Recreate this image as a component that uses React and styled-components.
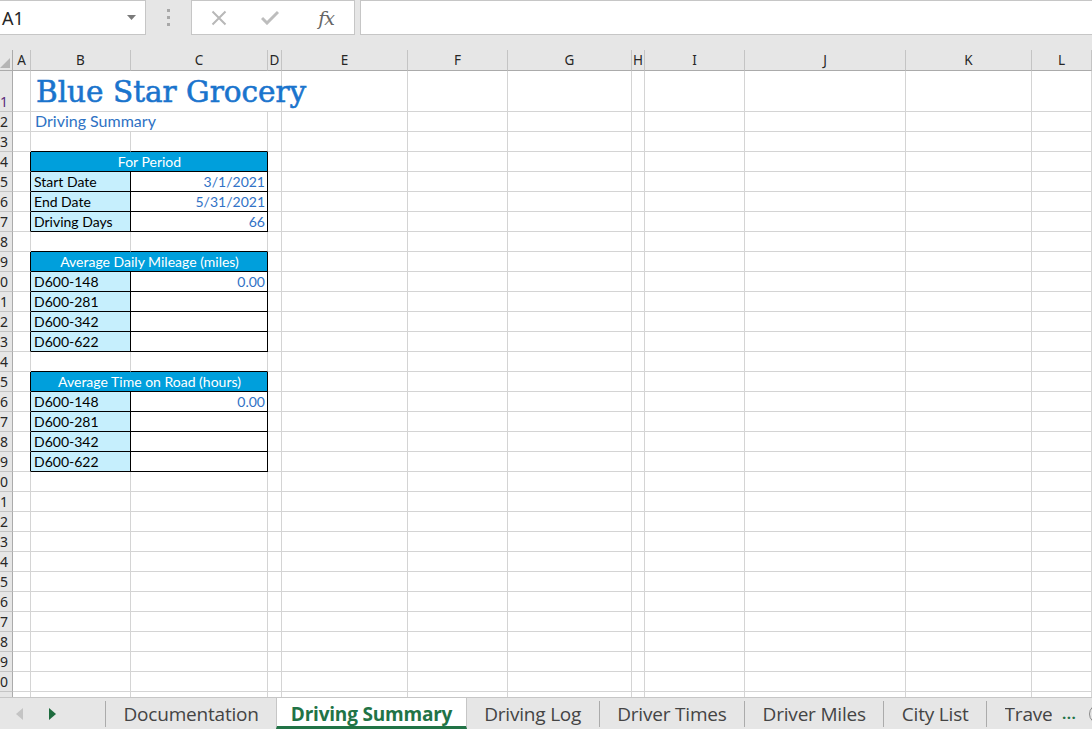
import React from 'react';
import styled, { createGlobalStyle } from 'styled-components';

const GlobalStyle = createGlobalStyle`
  html, body {
    margin: 0;
    padding: 0;
    background: #ffffff;
    overflow: hidden;
  }
  body {
    font-family: "Noto Sans", "Liberation Sans", sans-serif;
  }
`;

const Shell = styled.div`
  width: 1092px;
  height: 729px;
  display: flex;
  flex-direction: column;
  overflow: hidden;
  background: #ffffff;
`;

/* ---------- formula bar ---------- */

const FormulaBar = styled.div`
  height: 50px;
  flex-shrink: 0;
  background: #e6e6e6;
  display: flex;
  align-items: flex-start;
`;

const NameBox = styled.div`
  box-sizing: border-box;
  width: 146px;
  height: 35px;
  background: #fff;
  border: 1px solid #c6c6c6;
  border-left: none;
  display: flex;
  align-items: center;
  justify-content: space-between;
  padding: 0 9px 0 2px;
  font-family: "Noto Sans", sans-serif;
  font-size: 18px;
  color: #262626;
`;

const Grip = styled.div`
  width: 45px;
  height: 35px;
  display: flex;
  flex-direction: column;
  align-items: center;
  justify-content: center;
  gap: 4px;
  span {
    width: 3px;
    height: 3px;
    background: #a8a8a8;
  }
`;

const FxBox = styled.div`
  box-sizing: border-box;
  width: 164px;
  height: 35px;
  background: #fff;
  border: 1px solid #c6c6c6;
  display: flex;
  align-items: center;
  padding-left: 1px;
`;

const FxSlot = styled.div`
  width: ${p => p.$w || 52}px;
  display: flex;
  justify-content: center;
  align-items: center;
`;

const FxLabel = styled.span`
  font-family: "DejaVu Serif", "Liberation Serif", serif;
  font-style: italic;
  font-size: 19px;
  color: #666;
  letter-spacing: -1px;
  padding-left: 3px;
`;

const FormulaInput = styled.div`
  box-sizing: border-box;
  flex: 1;
  height: 35px;
  margin-left: 5px;
  background: #fff;
  border: 1px solid #c6c6c6;
  border-right: none;
`;

/* ---------- sheet grid ---------- */

const COLS = [
  ['A', 18], ['B', 100], ['C', 137], ['D', 14], ['E', 126], ['F', 100],
  ['G', 124], ['H', 13], ['I', 100], ['J', 161], ['K', 126], ['L', 0],
];

const Sheet = styled.div`
  flex: 1;
  overflow: hidden;
  display: grid;
  grid-template-columns: 13px ${COLS.map(([, w]) => (w ? `${w}px` : '1fr')).join(' ')};
  grid-template-rows: 21px 41px repeat(30, 20px);
  align-content: start;
  font-family: Lato, "Noto Sans", sans-serif;
`;

const Corner = styled.div`
  box-sizing: border-box;
  background: #e6e6e6;
  border-right: 1px solid #ababab;
  border-bottom: 1px solid #ababab;
  display: flex;
  align-items: flex-end;
  justify-content: flex-end;
  padding: 0 2px 2px 0;
`;

const ColHead = styled.div`
  box-sizing: border-box;
  background: #e6e6e6;
  border-right: 1px solid #c4c4c4;
  border-bottom: 1px solid #ababab;
  display: flex;
  align-items: center;
  justify-content: center;
  font-family: "Noto Sans", sans-serif;
  font-size: 13.5px;
  color: #262626;
  overflow: hidden;
`;

const RowHead = styled.div`
  box-sizing: border-box;
  background: #e6e6e6;
  border-right: 1px solid #ababab;
  border-bottom: 1px solid #c4c4c4;
  display: flex;
  align-items: flex-end;
  justify-content: flex-end;
  padding: 0 4px 0 0;
  font-family: "Noto Sans", sans-serif;
  font-size: 14px;
  line-height: 19px;
  color: ${p => (p.$active ? '#5b2a7a' : '#262626')};
  overflow: hidden;
  white-space: nowrap;
`;

const Cell = styled.div`
  box-sizing: border-box;
  grid-column: span ${p => p.$span || 1};
  border-right: 1px solid ${p => (p.$rb ? '#000' : '#d4d4d4')};
  border-bottom: 1px solid ${p => (p.$bb ? '#000' : '#d4d4d4')};
  background: ${p => p.$fill || 'transparent'};
  color: ${p => p.$color || '#000'};
  display: flex;
  align-items: flex-end;
  justify-content: ${p => p.$align || 'flex-start'};
  padding: 0 2px 0 3px;
  font-size: 14px;
  line-height: 19px;
  white-space: nowrap;
  overflow: ${p => (p.$spill ? 'visible' : 'hidden')};
`;

const Title = styled.span`
  font-family: "DejaVu Serif", "Liberation Serif", serif;
  font-size: 29.5px;
  line-height: 38px;
  color: #1a74cd;
  -webkit-text-stroke: 0.6px #1a74cd;
  padding-left: 2px;
`;

const Subtitle = styled.span`
  font-family: Lato, "Noto Sans", sans-serif;
  font-size: 16px;
  line-height: 20px;
  color: #2e72c4;
  padding-left: 1px;
`;

/* ---------- sheet tabs ---------- */

const TabBar = styled.div`
  box-sizing: border-box;
  height: 32px;
  flex-shrink: 0;
  background: #e6e6e6;
  border-top: 1px solid #c6c6c6;
  display: flex;
  align-items: stretch;
  overflow: hidden;
  font-family: "Open Sans", "Noto Sans", sans-serif;
`;

const TabNav = styled.div`
  width: 105px;
  flex-shrink: 0;
  display: flex;
  align-items: center;
  padding-left: 16px;
  gap: 26px;
  box-sizing: border-box;
`;

const Divider = styled.span`
  width: 1px;
  flex-shrink: 0;
  align-self: center;
  height: 26px;
  background: #ababab;
`;

const Tab = styled.div`
  flex-shrink: 0;
  display: flex;
  align-items: center;
  padding: 0 ${p => (p.$active ? 13.5 : 17.5)}px;
  font-size: 19px;
  font-weight: ${p => (p.$active ? 700 : 400)};
  color: ${p => (p.$active ? '#217346' : '#444')};
  background: ${p => (p.$active ? '#fff' : 'transparent')};
  border-left: ${p => (p.$active ? '1px solid #c6c6c6' : 'none')};
  border-right: ${p => (p.$active ? '1px solid #c6c6c6' : 'none')};
  border-bottom: 3px solid ${p => (p.$active ? '#217346' : 'transparent')};
  padding-top: 3px;
  letter-spacing: -0.2px;
`;

const Clipped = styled.span`
  display: inline-block;
  width: ${p => p.$w}px;
  overflow: hidden;
  white-space: nowrap;
`;

const More = styled.span`
  flex-shrink: 0;
  align-self: center;
  color: #217346;
  font-weight: 700;
  font-size: 15px;
  margin-left: -7px;
  letter-spacing: 0.5px;
  padding-bottom: 2px;
`;

const AddSheet = styled.span`
  flex-shrink: 0;
  align-self: center;
  width: 18px;
  height: 18px;
  border-radius: 50%;
  border: 1px solid #8a8a8a;
  margin-left: 13px;
`;

/* ---------- data ---------- */

const HEAD_FILL = '#009fdc';
const LABEL_FILL = '#c6effd';
const VALUE_BLUE = '#3172c6';

const head = text => ({ text, span: 2, fill: HEAD_FILL, color: '#fff', align: 'center' });
const label = text => ({ text, fill: LABEL_FILL });
const value = text => ({ text, color: VALUE_BLUE, align: 'flex-end' });

const CELLS = {
  1: { B: { title: 'Blue Star Grocery', span: 3, spill: true } },
  2: { B: { subtitle: 'Driving Summary', span: 2, spill: true } },
  4: { B: head('For Period') },
  5: { B: label('Start Date'), C: value('3/1/2021') },
  6: { B: label('End Date'), C: value('5/31/2021') },
  7: { B: label('Driving Days'), C: value('66') },
  9: { B: head('Average Daily Mileage (miles)') },
  10: { B: label('D600-148'), C: value('0.00') },
  11: { B: label('D600-281'), C: value('') },
  12: { B: label('D600-342'), C: value('') },
  13: { B: label('D600-622'), C: value('') },
  15: { B: head('Average Time on Road (hours)') },
  16: { B: label('D600-148'), C: value('0.00') },
  17: { B: label('D600-281'), C: value('') },
  18: { B: label('D600-342'), C: value('') },
  19: { B: label('D600-622'), C: value('') },
};

const TABLES = [[4, 7], [9, 13], [15, 19]];
const inTable = r => TABLES.some(([a, b]) => r >= a && r <= b);
const aboveTable = r => TABLES.some(([a]) => r + 1 === a);

const TABS = ['Documentation', 'Driving Summary', 'Driving Log', 'Driver Times', 'Driver Miles', 'City List'];
const ACTIVE_TAB = 'Driving Summary';

function SheetRow({ r }) {
  const defs = CELLS[r] || {};
  const out = [<RowHead key="h" $active={r === 1}>{r}</RowHead>];
  let skip = 0;
  COLS.forEach(([col]) => {
    if (skip > 0) { skip--; return; }
    const d = defs[col] || {};
    const span = d.span || 1;
    skip = span - 1;
    const tableCol = col === 'B' || col === 'C';
    const rb = (col === 'A' && inTable(r)) || (tableCol && inTable(r));
    const bb = tableCol && (inTable(r) || aboveTable(r));
    out.push(
      <Cell
        key={col}
        $span={span}
        $rb={rb}
        $bb={bb}
        $fill={d.fill}
        $color={d.color}
        $align={d.align}
        $spill={d.spill}
      >
        {d.title && <Title>{d.title}</Title>}
        {d.subtitle && <Subtitle>{d.subtitle}</Subtitle>}
        {d.text}
      </Cell>
    );
  });
  return out;
}

export default function App() {
  const rows = Array.from({ length: 31 }, (_, i) => i + 1);
  return (
    <Shell>
      <GlobalStyle />
      <FormulaBar>
        <NameBox>
          <span>A1</span>
          <svg width="9" height="5" viewBox="0 0 9 5"><path d="M0 0h9L4.5 5z" fill="#7a7a7a" /></svg>
        </NameBox>
        <Grip><span /><span /><span /></Grip>
        <FxBox>
          <FxSlot>
            <svg width="16" height="16" viewBox="0 0 16 16">
              <path d="M1.5 1.5l13 13M14.5 1.5l-13 13" stroke="#b8b8b8" strokeWidth="2" />
            </svg>
          </FxSlot>
          <FxSlot>
            <svg width="18" height="15" viewBox="0 0 18 15">
              <path d="M1 8l5 5L17 2" stroke="#bdbdbd" strokeWidth="3" fill="none" />
            </svg>
          </FxSlot>
          <FxSlot $w={60}><FxLabel>fx</FxLabel></FxSlot>
        </FxBox>
        <FormulaInput />
      </FormulaBar>

      <Sheet>
        <Corner>
          <svg width="10" height="10" viewBox="0 0 10 10"><path d="M10 0v10H0z" fill="#b5b5b5" /></svg>
        </Corner>
        {COLS.map(([c]) => <ColHead key={c}>{c}</ColHead>)}
        {rows.map(r => <SheetRow key={r} r={r} />)}
      </Sheet>

      <TabBar>
        <TabNav>
          <svg width="7" height="12" viewBox="0 0 7 12"><path d="M7 0v12L0 6z" fill="#c4c4c4" /></svg>
          <svg width="7" height="12" viewBox="0 0 7 12"><path d="M0 0v12l7-6z" fill="#1e6b3e" /></svg>
        </TabNav>
        {TABS.map((t, i) => {
          const active = t === ACTIVE_TAB;
          const prevActive = i > 0 && TABS[i - 1] === ACTIVE_TAB;
          return (
            <React.Fragment key={t}>
              {!active && !prevActive && <Divider />}
              <Tab $active={active}>{t}</Tab>
            </React.Fragment>
          );
        })}
        <Divider />
        <Tab><Clipped $w={47}>Travel Log</Clipped></Tab>
        <More>...</More>
        <AddSheet />
      </TabBar>
    </Shell>
  );
}
